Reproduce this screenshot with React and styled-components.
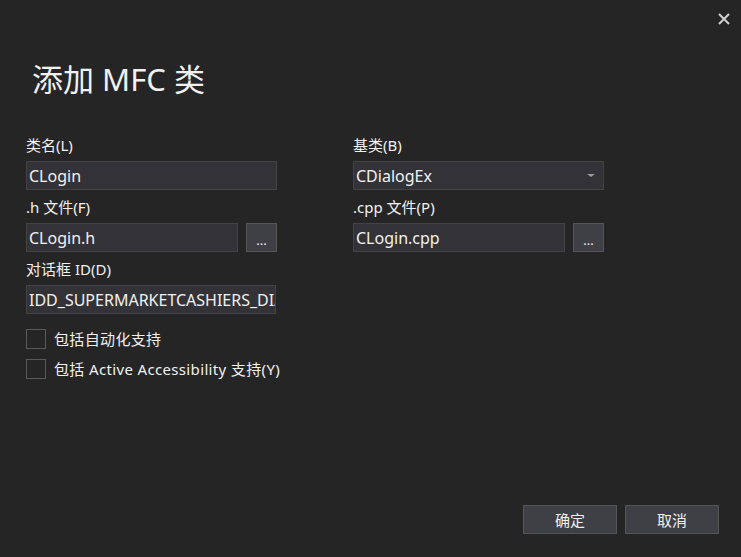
import React from 'react';
import styled, { createGlobalStyle } from 'styled-components';

const GlobalStyle = createGlobalStyle`
  html, body {
    margin: 0;
    padding: 0;
    background: #252526;
  }
  body {
    font-family: "Noto Sans", "Noto Sans CJK SC", sans-serif;
    color: #f1f1f1;
  }
`;

const Dialog = styled.div`
  position: relative;
  box-sizing: border-box;
  width: 741px;
  height: 557px;
  display: flex;
  flex-direction: column;
  padding: 58px 22px 23px 26px;
  background: #252526;
`;

const CloseButton = styled.button`
  position: absolute;
  top: 11px;
  right: 9px;
  width: 16px;
  height: 16px;
  padding: 0;
  border: none;
  background: transparent;
  display: flex;
  align-items: center;
  justify-content: center;
  cursor: pointer;
`;

const Title = styled.h1`
  margin: 0 0 0 6px;
  font-size: 31px;
  font-weight: 400;
  line-height: 42px;
  color: #f1f1f1;
`;

const Form = styled.div`
  margin-top: 28px;
  display: grid;
  grid-template-columns: 251px 251px;
  column-gap: 76px;
`;

const Field = styled.div`
  display: flex;
  flex-direction: column;
`;

const Label = styled.label`
  margin-top: 7px;
  margin-bottom: 6px;
  font-size: 15px;
  line-height: 20px;
  color: #f1f1f1;
`;

const InputRow = styled.div`
  display: flex;
  gap: 8px;
`;

const TextBox = styled.div`
  box-sizing: border-box;
  flex: ${p => (p.$grow ? '1 1 0' : 'none')};
  width: ${p => (p.$narrow ? '250px' : 'auto')};
  min-width: 0;
  height: 29px;
  padding: 0 2px;
  display: flex;
  align-items: center;
  background: #333337;
  border: 1px solid #434346;
  font-size: 16px;
  color: #f1f1f1;
  white-space: nowrap;
  overflow: hidden;
`;

const SelectBox = styled(TextBox)`
  justify-content: space-between;
  padding-right: 8px;
`;

const Arrow = styled.span`
  width: 0;
  height: 0;
  border-left: 4px solid transparent;
  border-right: 4px solid transparent;
  border-top: 3px solid #999999;
`;

const BrowseButton = styled.button`
  box-sizing: border-box;
  width: 31px;
  height: 29px;
  padding: 4px 0 0;
  background: #3f3f46;
  border: 1px solid #555555;
  color: #f1f1f1;
  font-family: inherit;
  font-size: 13px;
`;

const Checks = styled.div`
  margin-top: 15px;
  display: flex;
  flex-direction: column;
  gap: 10px;
`;

const CheckRow = styled.label`
  display: flex;
  align-items: center;
  gap: 8px;
  font-size: 15px;
  line-height: 20px;
  letter-spacing: 0.35px;
  color: #f1f1f1;
`;

const CheckSquare = styled.span`
  box-sizing: border-box;
  width: 20px;
  height: 20px;
  border: 1px solid #5a5a5e;
  background: #252526;
`;

const Footer = styled.div`
  margin-top: auto;
  display: flex;
  justify-content: flex-end;
  gap: 8px;
`;

const ActionButton = styled.button`
  box-sizing: border-box;
  width: 94px;
  height: 29px;
  background: #3f3f46;
  border: 1px solid #555555;
  color: #f1f1f1;
  font-family: inherit;
  font-size: 15px;
`;

const App = () => {
  return (
    <>
      <GlobalStyle />
      <Dialog>
        <CloseButton aria-label="关闭">
          <svg width="12" height="12" viewBox="0 0 12 12">
            <path d="M1 1 L11 11 M11 1 L1 11" stroke="#d0d0d0" strokeWidth="2" />
          </svg>
        </CloseButton>
        <Title>添加 MFC 类</Title>

        <Form>
          <Field>
            <Label>类名(L)</Label>
            <TextBox>CLogin</TextBox>
          </Field>
          <Field>
            <Label>基类(B)</Label>
            <SelectBox>
              CDialogEx
              <Arrow />
            </SelectBox>
          </Field>

          <Field>
            <Label>.h 文件(F)</Label>
            <InputRow>
              <TextBox $grow>CLogin.h</TextBox>
              <BrowseButton>...</BrowseButton>
            </InputRow>
          </Field>
          <Field>
            <Label>.cpp 文件(P)</Label>
            <InputRow>
              <TextBox $grow>CLogin.cpp</TextBox>
              <BrowseButton>...</BrowseButton>
            </InputRow>
          </Field>

          <Field>
            <Label>对话框 ID(D)</Label>
            <TextBox $narrow>IDD_SUPERMARKETCASHIERS_DIALOG</TextBox>
          </Field>
        </Form>

        <Checks>
          <CheckRow>
            <CheckSquare />
            包括自动化支持
          </CheckRow>
          <CheckRow>
            <CheckSquare />
            包括 Active Accessibility 支持(Y)
          </CheckRow>
        </Checks>

        <Footer>
          <ActionButton>确定</ActionButton>
          <ActionButton>取消</ActionButton>
        </Footer>
      </Dialog>
    </>
  );
};

export default App;
